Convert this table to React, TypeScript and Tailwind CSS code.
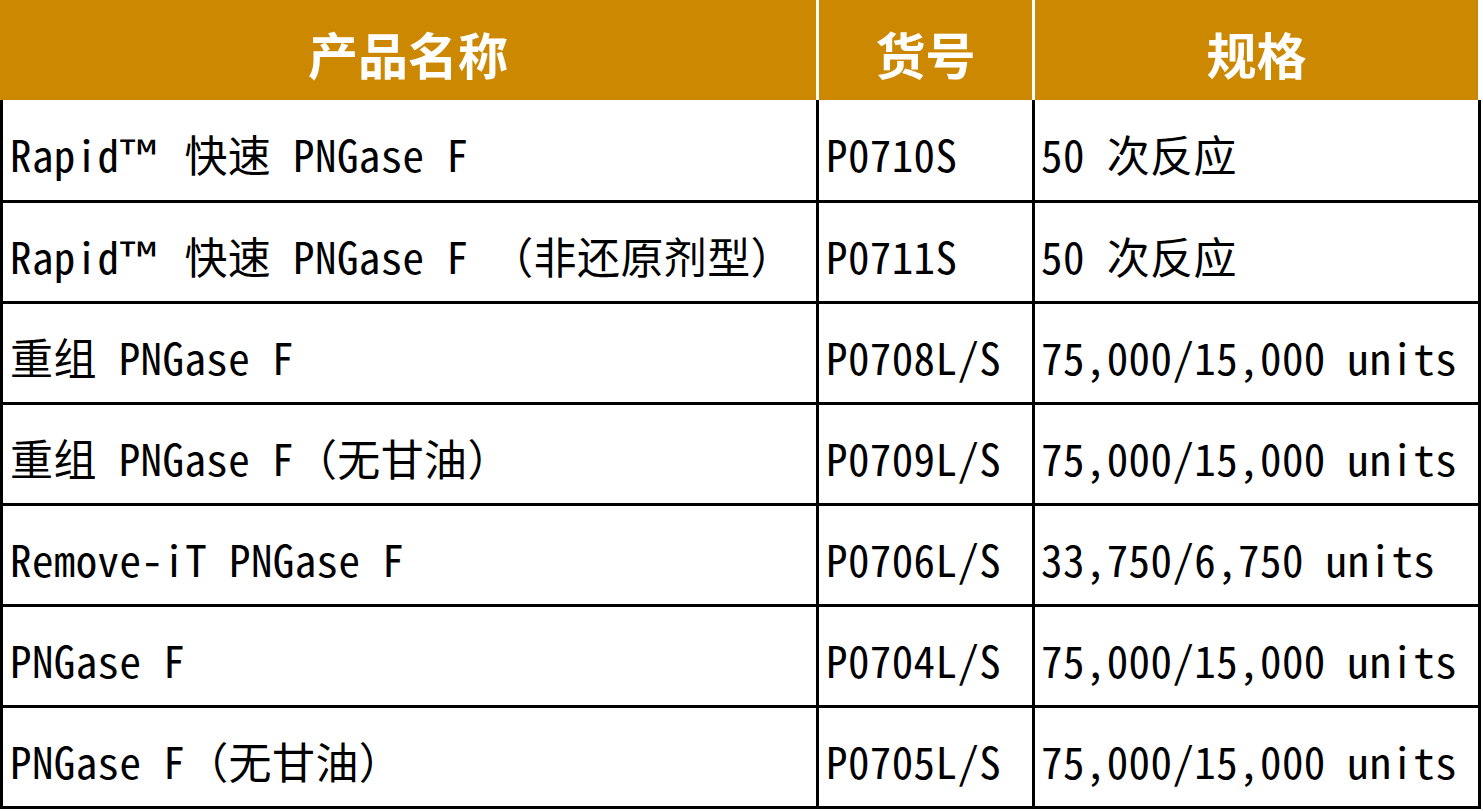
import React from "react";

const TM = () => (
  <span className="inline-block w-[43px]">
    <span className="inline-block origin-left scale-x-[1.2]">™</span>
  </span>
);

const rows: [React.ReactNode, string, string][] = [
  [<>Rapid<TM /> 快速 PNGase F</>, "P0710S", "50 次反应"],
  [<>Rapid<TM /> 快速 PNGase F （非还原剂型）</>, "P0711S", "50 次反应"],
  ["重组 PNGase F", "P0708L/S", "75,000/15,000 units"],
  ["重组 PNGase F（无甘油）", "P0709L/S", "75,000/15,000 units"],
  ["Remove-iT PNGase F", "P0706L/S", "33,750/6,750 units"],
  ["PNGase F", "P0704L/S", "75,000/15,000 units"],
  ["PNGase F（无甘油）", "P0705L/S", "75,000/15,000 units"],
];

export default function App() {
  return (
    <div className="w-[1483px] h-[811px] bg-white overflow-hidden">
      <div className="w-[1481px]">
        <div className="flex h-[100px] bg-white font-['Noto_Sans_CJK_SC',sans-serif] font-bold text-white text-[50px] leading-none">
          <div className="w-[816px] bg-[#cc8800] flex items-center justify-center pt-[5px]">产品名称</div>
          <div className="w-[216px] box-border border-l-[3px] border-white bg-[#cc8800] flex items-center justify-center pt-[5px]">货号</div>
          <div className="w-[449px] box-border border-l-[3px] border-r-[3px] border-white bg-[#cc8800] flex items-center justify-center pt-[5px]">规格</div>
        </div>
        {rows.map((r, i) => (
          <div
            key={i}
            className={`flex ${i === 0 ? "h-[103px]" : "h-[101px]"} box-border border-b-[3px] border-black font-['Noto_Sans_Mono_CJK_SC','Noto_Sans_CJK_SC',monospace] text-[43px] leading-none tracking-[0.4px] text-black whitespace-pre`}
          >
            <div className="w-[816px] box-border border-l-[3px] border-black flex items-center pl-[7px] pt-[6px]">{r[0]}</div>
            <div className="w-[216px] box-border border-l-[3px] border-black flex items-center pl-[7px] pt-[6px]">{r[1]}</div>
            <div className="w-[449px] box-border border-l-[3px] border-r-[3px] border-black flex items-center pl-[6px] pt-[6px]">{r[2]}</div>
          </div>
        ))}
      </div>
    </div>
  );
}
